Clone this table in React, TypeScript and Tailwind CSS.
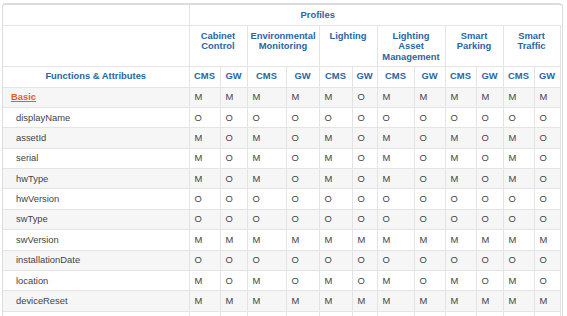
const groups = [
  ['Cabinet', 'Control'],
  ['Environmental', 'Monitoring'],
  ['Lighting'],
  ['Lighting', 'Asset', 'Management'],
  ['Smart', 'Parking'],
  ['Smart', 'Traffic'],
];

const colWidths = [31, 27, 39, 33, 33, 25, 37, 31, 31, 27, 31, 26];

const alt = 'M O M O M O M O M O M O';
const rows: { name: string; values: string; section?: boolean }[] = [
  { name: 'Basic', values: 'M M M M M O M M M M M M', section: true },
  { name: 'displayName', values: 'O O O O O O O O O O O O' },
  { name: 'assetId', values: alt },
  { name: 'serial', values: alt },
  { name: 'hwType', values: alt },
  { name: 'hwVersion', values: 'O O O O O O O O O O O O' },
  { name: 'swType', values: 'O O O O O O O O O O O O' },
  { name: 'swVersion', values: 'M M M M M M M M M M M M' },
  { name: 'installationDate', values: 'O O O O O O O O O O O O' },
  { name: 'location', values: alt },
  { name: 'deviceReset', values: 'M M M M M M M M M M M M' },
  { name: '', values: '            ' },
];

export default function App() {
  return (
    <div className="w-[567px] h-[316px] overflow-hidden bg-white pt-[3px] pl-[2px] font-['Liberation_Sans',Arial,sans-serif] text-[9.4px]">
      <div className="w-[561px] overflow-hidden rounded-[4px] border border-[#dcdcdc] border-t-2">
        <table className="table-fixed border-collapse w-[558px]">
          <colgroup>
            <col className="w-[186px]" />
            {colWidths.map((w, i) => (
              <col key={i} style={{ width: w }} />
            ))}
          </colgroup>
          <thead className="text-[#2a66a3] font-bold">
            <tr className="h-[20px]">
              <th className="border-r border-b border-[#e4e4e4]" />
              <th colSpan={12} className="border-b border-[#e4e4e4] text-left pl-[111px] align-middle">
                Profiles
              </th>
            </tr>
            <tr className="h-[41px]">
              <th className="border-r border-b border-[#e4e4e4]" />
              {groups.map((g, i) => (
                <th key={i} colSpan={2} className="border-r border-b border-[#e4e4e4] align-top pt-[5px] leading-[10.6px] text-center">
                  {g.map((line, j) => (
                    <div key={j}>{line}</div>
                  ))}
                </th>
              ))}
            </tr>
            <tr className="h-[21px]">
              <th className="border-r border-b border-[#e4e4e4] text-center">Functions &amp; Attributes</th>
              {colWidths.map((_, i) => (
                <th key={i} className="border-r border-b border-[#e4e4e4] text-center px-0">
                  {i % 2 === 0 ? 'CMS' : 'GW'}
                </th>
              ))}
            </tr>
          </thead>
          <tbody className="text-[#444]">
            {rows.map((r, ri) => (
              <tr key={ri} className={`h-[20.4px] ${ri % 2 === 0 ? 'bg-[#f6f6f6]' : 'bg-white'}`}>
                <td
                  className={
                    r.section
                      ? 'border-r border-b border-[#e4e4e4] pl-[8px] font-bold text-[#f15a24] underline'
                      : 'border-r border-b border-[#e4e4e4] pl-[13px]'
                  }
                >
                  {r.name}
                </td>
                {r.values.split(' ').map((v, i) => (
                  <td key={i} className="border-r border-b border-[#e4e4e4] pl-[5px]">
                    {v}
                  </td>
                ))}
              </tr>
            ))}
          </tbody>
        </table>
      </div>
    </div>
  );
}
